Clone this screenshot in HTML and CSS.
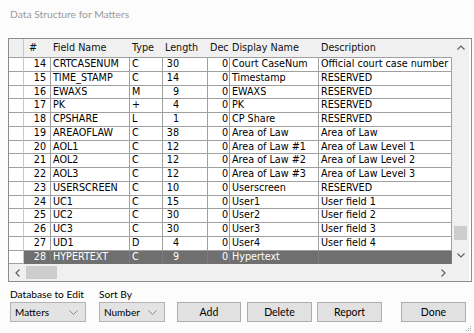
FILE: index.html
```html
<!DOCTYPE html>
<html lang="en">

<head>
 <meta charset="UTF-8">
 <meta name="viewport" content="width=device-width, initial-scale=1.0">
 <link rel="stylesheet" href="styles.css">
 <title>Data Structure for Matters</title>
</head>

<body>
 <div class="dialog">
  <h1 class="title">Data Structure for Matters</h1>

  <div class="grid">
   <div class="grid-body">
    <div class="row head">
     <div class="cell"></div>
     <div class="cell num">#</div>
     <div class="cell">Field Name</div>
     <div class="cell">Type</div>
     <div class="cell">Length</div>
     <div class="cell">Dec</div>
     <div class="cell">Display Name</div>
     <div class="cell">Description</div>
    </div>
    <div class="row"><div class="cell"></div><div class="cell num">14</div><div class="cell">CRTCASENUM</div><div class="cell">C</div><div class="cell len">30</div><div class="cell dec">0</div><div class="cell">Court CaseNum</div><div class="cell">Official court case number</div></div>
    <div class="row"><div class="cell"></div><div class="cell num">15</div><div class="cell">TIME_STAMP</div><div class="cell">C</div><div class="cell len">14</div><div class="cell dec">0</div><div class="cell">Timestamp</div><div class="cell">RESERVED</div></div>
    <div class="row"><div class="cell"></div><div class="cell num">16</div><div class="cell">EWAXS</div><div class="cell">M</div><div class="cell len">9</div><div class="cell dec">0</div><div class="cell">EWAXS</div><div class="cell">RESERVED</div></div>
    <div class="row"><div class="cell"></div><div class="cell num">17</div><div class="cell">PK</div><div class="cell">+</div><div class="cell len">4</div><div class="cell dec">0</div><div class="cell">PK</div><div class="cell">RESERVED</div></div>
    <div class="row"><div class="cell"></div><div class="cell num">18</div><div class="cell">CPSHARE</div><div class="cell">L</div><div class="cell len">1</div><div class="cell dec">0</div><div class="cell">CP Share</div><div class="cell">RESERVED</div></div>
    <div class="row"><div class="cell"></div><div class="cell num">19</div><div class="cell">AREAOFLAW</div><div class="cell">C</div><div class="cell len">38</div><div class="cell dec">0</div><div class="cell">Area of Law</div><div class="cell">Area of Law</div></div>
    <div class="row"><div class="cell"></div><div class="cell num">20</div><div class="cell">AOL1</div><div class="cell">C</div><div class="cell len">12</div><div class="cell dec">0</div><div class="cell">Area of Law #1</div><div class="cell">Area of Law Level 1</div></div>
    <div class="row"><div class="cell"></div><div class="cell num">21</div><div class="cell">AOL2</div><div class="cell">C</div><div class="cell len">12</div><div class="cell dec">0</div><div class="cell">Area of Law #2</div><div class="cell">Area of Law Level 2</div></div>
    <div class="row"><div class="cell"></div><div class="cell num">22</div><div class="cell">AOL3</div><div class="cell">C</div><div class="cell len">12</div><div class="cell dec">0</div><div class="cell">Area of Law #3</div><div class="cell">Area of Law Level 3</div></div>
    <div class="row"><div class="cell"></div><div class="cell num">23</div><div class="cell">USERSCREEN</div><div class="cell">C</div><div class="cell len">10</div><div class="cell dec">0</div><div class="cell">Userscreen</div><div class="cell">RESERVED</div></div>
    <div class="row"><div class="cell"></div><div class="cell num">24</div><div class="cell">UC1</div><div class="cell">C</div><div class="cell len">15</div><div class="cell dec">0</div><div class="cell">User1</div><div class="cell">User field 1</div></div>
    <div class="row"><div class="cell"></div><div class="cell num">25</div><div class="cell">UC2</div><div class="cell">C</div><div class="cell len">30</div><div class="cell dec">0</div><div class="cell">User2</div><div class="cell">User field 2</div></div>
    <div class="row"><div class="cell"></div><div class="cell num">26</div><div class="cell">UC3</div><div class="cell">C</div><div class="cell len">30</div><div class="cell dec">0</div><div class="cell">User3</div><div class="cell">User field 3</div></div>
    <div class="row"><div class="cell"></div><div class="cell num">27</div><div class="cell">UD1</div><div class="cell">D</div><div class="cell len">4</div><div class="cell dec">0</div><div class="cell">User4</div><div class="cell">User field 4</div></div>
    <div class="row selected"><div class="cell"></div><div class="cell num">28</div><div class="cell">HYPERTEXT</div><div class="cell">C</div><div class="cell len">9</div><div class="cell dec">0</div><div class="cell">Hypertext</div><div class="cell"></div></div>
   </div>

   <div class="vscroll">
    <div class="arrow">
     <svg width="8" height="5" viewBox="0 0 8 5"><path d="M0.5 4.5 L4 1 L7.5 4.5" fill="none" stroke="#606060" stroke-width="1.2"/></svg>
    </div>
    <div class="vtrack"><div class="vthumb"></div></div>
    <div class="arrow">
     <svg width="8" height="5" viewBox="0 0 8 5"><path d="M0.5 0.5 L4 4 L7.5 0.5" fill="none" stroke="#606060" stroke-width="1.2"/></svg>
    </div>
   </div>

   <div class="hscroll">
    <div class="arrow">
     <svg width="5" height="8" viewBox="0 0 5 8"><path d="M4.5 0.5 L1 4 L4.5 7.5" fill="none" stroke="#606060" stroke-width="1.2"/></svg>
    </div>
    <div class="htrack"><div class="hthumb"></div></div>
    <div class="arrow">
     <svg width="5" height="8" viewBox="0 0 5 8"><path d="M0.5 0.5 L4 4 L0.5 7.5" fill="none" stroke="#606060" stroke-width="1.2"/></svg>
    </div>
   </div>
   <div class="corner"></div>
  </div>

  <div class="controls">
   <div class="field field-db">
    <label>Database to Edit</label>
    <div class="select select-db">
     <span>Matters</span>
     <svg width="9" height="5" viewBox="0 0 9 5"><path d="M0.5 0.5 L4.5 4.5 L8.5 0.5" fill="none" stroke="#888" stroke-width="1"/></svg>
    </div>
   </div>
   <div class="field field-sort">
    <label>Sort By</label>
    <div class="select select-sort">
     <span>Number</span>
     <svg width="9" height="5" viewBox="0 0 9 5"><path d="M0.5 0.5 L4.5 4.5 L8.5 0.5" fill="none" stroke="#888" stroke-width="1"/></svg>
    </div>
   </div>
   <button class="btn btn-add">Add</button>
   <button class="btn btn-delete">Delete</button>
   <button class="btn btn-report">Report</button>
   <button class="btn btn-done">Done</button>
  </div>

  <div class="grip">
   <svg width="7" height="7" viewBox="0 0 7 7">
    <rect x="5" y="1" width="1" height="1" fill="#aaa"/>
    <rect x="3" y="3" width="1" height="1" fill="#aaa"/>
    <rect x="5" y="3" width="1" height="1" fill="#aaa"/>
    <rect x="1" y="5" width="1" height="1" fill="#aaa"/>
    <rect x="3" y="5" width="1" height="1" fill="#aaa"/>
    <rect x="5" y="5" width="1" height="1" fill="#aaa"/>
   </svg>
  </div>
 </div>
</body>

</html>
```

FILE: styles.css
```css
/* Reset */
body,
h1 {
 margin: 0;
 padding: 0;
}

body {
 background-color: #fcfcfc;
 color: #000;
 font-family: Lato, "Open Sans", sans-serif;
 font-size: 10px;
}

.dialog {
 position: relative;
 width: 474px;
 height: 333px;
 padding: 0 5px 0 8px;
 box-sizing: border-box;
 overflow: hidden;
}

.title {
 font-size: 10.3px;
 font-weight: normal;
 color: #9a9a9a;
 line-height: 14px;
 padding: 7px 0 0 2px;
 height: 38px;
 box-sizing: border-box;
}

/* Grid with scrollbars */
.grid {
 display: grid;
 grid-template-columns: 443px 17px;
 grid-template-rows: 225.25px 17px;
 width: 462px;
 border: 1px solid #8c8c8c;
 background-color: #fff;
 font-family: "DejaVu Sans Condensed", "DejaVu Sans", sans-serif;
 font-size: 10.7px;
}

.grid-body {
 overflow: hidden;
}

.row {
 display: grid;
 grid-template-columns: 15px 27px 79px 33px 45px 22px 89px 133px;
 height: 13.75px;
 line-height: 12.5px;
}

.cell {
 border-right: 1px solid #a0a0a0;
 border-bottom: 1px solid #a0a0a0;
 padding: 0 2px;
 white-space: nowrap;
 overflow: hidden;
}

.row .cell:first-child {
 border-right-color: #c8c8c8;
}

.row.head {
 height: 19px;
 line-height: 18px;
 background-color: #f0f0f0;
 color: #111;
}

.row.head .cell {
 border-right: none;
 border-bottom-color: #a0a0a0;
}

.row.head .cell:first-child {
 border-right: 1px solid #c8c8c8;
}

.num {
 text-align: right;
 padding-right: 4px;
}

.row.head .num {
 text-align: left;
 padding-left: 5px;
}

.len {
 text-align: right;
 padding-right: 28px;
}

.dec {
 text-align: right;
 padding-right: 1px;
}

.row.selected .cell {
 background-color: #6f6f6f;
 color: #fff;
 border-right-color: #7c7c7c;
 border-bottom-color: #6f6f6f;
}

.row.selected .cell:first-child {
 background-color: #fff;
 border-right-color: #c8c8c8;
 border-bottom-color: #a0a0a0;
}

.vscroll {
 display: flex;
 flex-direction: column;
 background-color: #f0f0f0;
}

.vscroll .arrow {
 height: 17px;
 display: flex;
 align-items: center;
 justify-content: center;
}

.vtrack {
 flex: 1;
 position: relative;
}

.vthumb {
 position: absolute;
 left: 2px;
 right: 2px;
 bottom: 7px;
 height: 14px;
 background-color: #cdcdcd;
}

.hscroll {
 display: flex;
 background-color: #f0f0f0;
}

.hscroll .arrow {
 width: 17px;
 display: flex;
 align-items: center;
 justify-content: center;
}

.htrack {
 flex: 1;
 position: relative;
}

.hthumb {
 position: absolute;
 left: 0;
 top: 2px;
 bottom: 2px;
 width: 31px;
 background-color: #cdcdcd;
}

.corner {
 background-color: #f0f0f0;
}

/* Bottom controls */
.controls {
 display: flex;
 align-items: flex-end;
 margin-top: 5px;
 padding-left: 2px;
}

.field {
 display: flex;
 flex-direction: column;
}

.field label {
 font-size: 10.2px;
 line-height: 14px;
 margin-bottom: 1px;
 white-space: nowrap;
}

.field-sort {
 margin-left: 13px;
}

.select {
 display: flex;
 align-items: center;
 justify-content: space-between;
 height: 20px;
 box-sizing: border-box;
 border: 1px solid #b4b4b4;
 background-color: #e3e3e3;
 padding: 0 7px 0 4px;
}

.select-db {
 width: 76px;
}

.select-sort {
 width: 66px;
}

.btn {
 height: 20px;
 width: 65px;
 padding: 0;
 border: 1px solid #adadad;
 background-color: #e1e1e1;
 font-family: Lato, "Open Sans", sans-serif;
 font-size: 10.5px;
 color: #000;
}

.btn-add {
 margin-left: 12px;
 width: 64px;
}

.btn-delete {
 margin-left: 6px;
}

.btn-report {
 margin-left: 5px;
}

.btn-done {
 margin-left: 19px;
}

.grip {
 position: absolute;
 right: 2px;
 bottom: 1px;
 line-height: 0;
}
```
